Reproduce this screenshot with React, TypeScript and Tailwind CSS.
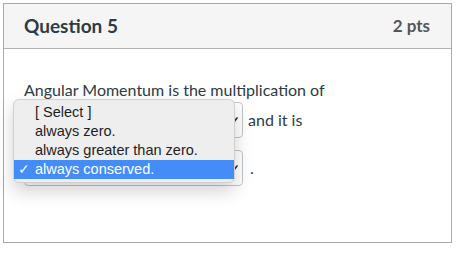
export default function App() {
  const options = ["[ Select ]", "always zero.", "always greater than zero.", "always conserved."];

  return (
    <div className="w-[460px] h-[256px] bg-white pt-[3px] pl-[3px]" style={{ fontFamily: "Lato, 'Noto Sans', sans-serif" }}>
      <div className="relative w-[449px] h-[240px] border border-[#a9a9a9]">
        <div className="flex items-center justify-between h-[45px] px-5 bg-[#f5f5f5] border-b border-[#b3b3b3]">
          <h2 className="text-[19px] font-bold text-[#2d3b45] pt-[1px]">Question 5</h2>
          <span className="text-[17px] font-bold text-[#555555] pr-[1px]">2 pts</span>
        </div>

        <div className="pl-5 pt-[29px] text-[16px] leading-[24px] text-[#2d3b45]">
          <p>Angular Momentum is the multiplication of</p>
          <div className="flex items-center gap-[5px]">
            <SelectBox />
            <span>and it is</span>
          </div>
          <div className="flex items-center gap-[7px] mt-3">
            <SelectBox />
            <span>.</span>
          </div>
        </div>

        <div
          className="absolute left-[9px] top-[95px] w-[222px] h-[84px] py-[3px] rounded-[6px] bg-[#eeeeee] border border-[#d0d0d0] shadow-[0_8px_18px_rgba(0,0,0,0.18)] text-[14.5px] text-[#1e1e1e]"
          style={{ fontFamily: "'Liberation Sans', Arial, sans-serif" }}
        >
          {options.map((o, i) => {
            const sel = i === 3;
            return (
              <div
                key={o}
                className={
                  sel
                    ? "flex items-center h-[19px] bg-[#448cf7] text-white"
                    : "flex items-center h-[19px]"
                }
              >
                <span className="w-[21px] pl-[4px] text-[14px]">{sel ? "✓" : ""}</span>
                <span>{o}</span>
              </div>
            );
          })}
        </div>
      </div>
    </div>
  );
}

function SelectBox() {
  return (
    <div className="relative w-[219px] h-[36px] rounded-[4px] border border-[#c3c6c9] bg-white">
      <svg className="absolute right-[4px] top-[14px]" width="9" height="7" viewBox="0 0 9 7">
        <path d="M1 2 L4.5 5.5 L8 1" fill="none" stroke="#2b2b2b" strokeWidth="1.6" strokeLinecap="round" />
      </svg>
    </div>
  );
}
